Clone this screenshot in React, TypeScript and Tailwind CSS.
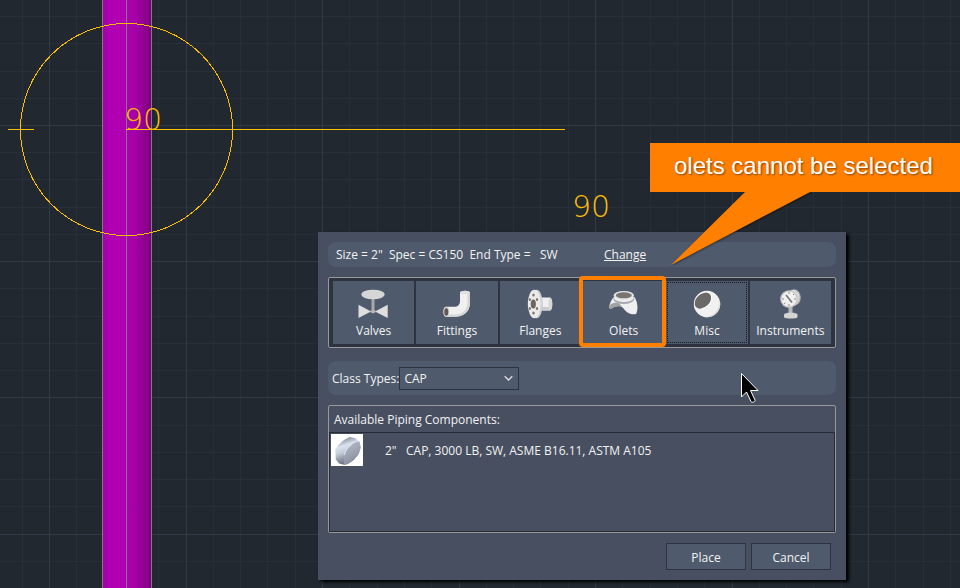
import React from "react";

const gridLines = Array.from({ length: 80 }, (_, i) => i - 10);

function Drawing() {
  return (
    <svg className="absolute inset-0 h-full w-full" aria-hidden="true" shapeRendering="crispEdges">
      <defs>
        <linearGradient id="pipe" x1="0" x2="1" y1="0" y2="0">
          <stop offset="0" stopColor="#a800aa" />
          <stop offset="0.2" stopColor="#b100b3" />
          <stop offset="0.5" stopColor="#ae00b0" />
          <stop offset="0.75" stopColor="#9d009f" />
          <stop offset="1" stopColor="#780079" />
        </linearGradient>
      </defs>
      {gridLines.map((i) => (
        <React.Fragment key={i}>
          <rect x={Math.round(49 + i * 27.3)} y="0" width="1" height="100%" fill="#272f3a" />
          <rect y={Math.round(125 + i * 27.24)} x="0" height="1" width="100%" fill="#272f3a" />
        </React.Fragment>
      ))}
      {gridLines
        .filter((i) => i % 5 === 0)
        .map((i) => (
          <React.Fragment key={i}>
            <rect x={Math.round(49 + i * 27.3)} y="0" width="1" height="100%" fill="#323a48" />
            <rect y={Math.round(125 + i * 27.24)} x="0" height="1" width="100%" fill="#323a48" />
          </React.Fragment>
        ))}
      <rect x="102" y="0" width="50" height="100%" fill="url(#pipe)" />
      <rect x="102" y="0" width="1" height="100%" fill="#7d7d7d" />
      <rect x="126" y="0" width="1" height="100%" fill="#7d7d7d" />
      <rect x="151" y="0" width="1" height="100%" fill="#7d7d7d" />
      <circle cx="126.5" cy="129.5" r="106" fill="none" stroke="#ffbf00" />
      <rect x="8" y="129" width="26" height="1" fill="#ffbf00" />
      <rect x="126" y="129" width="439" height="1" fill="#ffbf00" />
    </svg>
  );
}

function ValveIcon() {
  return (
    <svg width="32" height="32" viewBox="0 0 32 32" aria-hidden="true">
      <rect x="13.500" y="9" width="3" height="14" fill="#a9a9a9" />
      <ellipse cx="15" cy="6.500" rx="11.7" ry="4.8" fill="#d6d6d6" />
      <path d="M.5 16.800 13 23.500.5 30zM29.700 16.800 17 23.500l12.700 6.500z" fill="#dedede" />
      <path d="M12 23 15 21.500l3 1.500v1L15 25.500l-3-1.500z" fill="#b5b5b5" />
    </svg>
  );
}

function FittingIcon() {
  return (
    <svg width="32" height="32" viewBox="0 0 32 32" aria-hidden="true">
      <path d="M19 5c0-3 10-3 10 0v9.500C29 24 22 28.800 14 28.800H5c-3.300 0-3.300-10 0-10h8c4 0 6-2.300 6-5.800z" fill="#f0f0f0" />
      <path d="M29 5v9.500C29 24 22 28.800 14 28.800H5.500V26.500H14c7.500 0 12.500-4.500 12.500-12V3.500z" fill="#d6d6d6" />
      <path d="M19 5c0-3 10-3 10 0-1 1.500-9 1.500-10 0z" fill="#dfdfdf" />
      <ellipse cx="5.300" cy="23.800" rx="2.900" ry="5" fill="#d1d1d1" />
      <ellipse cx="5.300" cy="24" rx="2" ry="3.700" fill="#60564f" />
    </svg>
  );
}

function FlangeIcon() {
  return (
    <svg width="32" height="32" viewBox="0 0 32 32" aria-hidden="true">
      <path d="M17 9.500h9c3 0 3 13 0 13h-9z" fill="#efefef" />
      <path d="M17 19h10.700c-.4 2-1 3.500-2 3.500H17z" fill="#cccccc" />
      <path d="M26 9.700c3 1 3 12 0 12.800-2-2-2-11 0-12.800z" fill="#d7d7d7" />
      <ellipse cx="12.500" cy="16" rx="6.300" ry="14.300" fill="#cfcfcf" />
      <ellipse cx="10.300" cy="16" rx="6.500" ry="14.300" fill="#eaeaea" />
      <ellipse cx="9.300" cy="16" rx="2.600" ry="4.500" fill="#6b6560" />
      <g fill="#77716c">
        <ellipse cx="9.500" cy="7" rx="1.200" ry="1.600" />
        <ellipse cx="9.500" cy="25" rx="1.200" ry="1.600" />
        <ellipse cx="5.800" cy="11.500" rx="1.100" ry="1.500" />
        <ellipse cx="13" cy="11.500" rx="1.100" ry="1.500" />
        <ellipse cx="5.800" cy="20.500" rx="1.100" ry="1.500" />
        <ellipse cx="13" cy="20.500" rx="1.100" ry="1.500" />
      </g>
    </svg>
  );
}

function OletIcon() {
  return (
    <svg width="32" height="32" viewBox="0 0 32 32" aria-hidden="true">
      <path d="M6 9C3 12 1.500 15.500 1.300 19.500c0 1.500 1.500 1.200 2.500.7 3.500-2.200 7-3.200 10-1.200 2 1.300 3 3.500 5 5 3 2.200 6.500 2.800 9.300 2 2.500-5 1.400-12-1.600-17z" fill="#f0f0f0" />
      <path d="M1.500 19C1.700 16.500 4 15 7 14.800c3-.2 5.500 1 7 4.200-3-1.500-6.500-.5-9.500 1.100-1.500.8-3.200.7-3-1.100z" fill="#a2a2a2" />
      <path d="M5.700 9c.5 6.500 19.500 6.500 20.200 0l.6 1.500c-1 7.500-20.200 7.300-21.200.5z" fill="#a8adb4" />
      <ellipse cx="15.800" cy="7.500" rx="10.200" ry="4.500" fill="#e5e5e5" />
      <ellipse cx="15.800" cy="7.300" rx="8" ry="3" fill="#777472" />
    </svg>
  );
}

function MiscIcon() {
  return (
    <svg width="32" height="32" viewBox="0 0 32 32" aria-hidden="true">
      <circle cx="16" cy="16" r="13.200" fill="#f1f1f1" />
      <path d="M29 13C31 23 22.500 31 13 28.900c9 .3 15-7 16-15.900z" fill="#dcdcdc" />
      <ellipse cx="12" cy="12.500" rx="10.200" ry="7.300" transform="rotate(-43 12 12.500)" fill="#ffffff" />
      <ellipse cx="11.900" cy="12.600" rx="9.500" ry="6.500" transform="rotate(-43 11.900 12.600)" fill="#6b6867" />
    </svg>
  );
}

function InstrumentIcon() {
  return (
    <svg width="32" height="32" viewBox="0 0 32 32" aria-hidden="true">
      <rect x="14.500" y="19" width="4" height="8" fill="#b7b7b7" />
      <path d="M10 26.500c0-2.500 13.500-2.500 13.500 0V29c0 2-13.500 2-13.500 0z" fill="#d4d4d4" />
      <ellipse cx="20" cy="9.500" rx="6.800" ry="8.300" fill="#b0b0b0" />
      <ellipse cx="19.500" cy="9.500" rx="6" ry="7.500" fill="#d9d9d9" />
      <circle cx="15" cy="11" r="8.800" fill="#c4c4c4" />
      <circle cx="15" cy="11" r="7.500" fill="#f0f0f0" />
      <path d="m12 7 6 7.500" stroke="#777" strokeWidth="1.700" />
      <path d="M15 4v2M15 16v2M8 11h2M20 11h2M10 16l1.300-1.300M19 7l1-1" stroke="#888" strokeWidth="1" />
    </svg>
  );
}

const categories = [
  { label: "Valves", Icon: ValveIcon },
  { label: "Fittings", Icon: FittingIcon },
  { label: "Flanges", Icon: FlangeIcon },
  { label: "Olets", Icon: OletIcon },
  { label: "Misc", Icon: MiscIcon },
  { label: "Instruments", Icon: InstrumentIcon },
];

function CapThumbnail() {
  return (
    <svg className="h-8 w-8 bg-white" viewBox="0 0 32 32" aria-hidden="true">
      <defs>
        <linearGradient id="capSide" x1="0.3" y1="0" x2="0.6" y2="1">
          <stop offset="0" stopColor="#737984" />
          <stop offset="0.3" stopColor="#dbe3f0" />
          <stop offset="0.5" stopColor="#c3ccda" />
          <stop offset="0.75" stopColor="#8a909c" />
          <stop offset="1" stopColor="#555a63" />
        </linearGradient>
        <linearGradient id="capFace" x1="0.2" y1="0" x2="0.6" y2="1">
          <stop offset="0" stopColor="#b4bccb" />
          <stop offset="1" stopColor="#868c99" />
        </linearGradient>
      </defs>
      <path d="M4.300 15.500 8 10.500 13 6l5.500-3 5.500 1 4.500 3.500 1.200 6-2 6.500-5 6-6 4-3.700.8-5-1.300L4.800 25.500z" fill="url(#capSide)" />
      <path d="m28.500 7.500 1.200 6-2 6.500-5 6-6 4-3.700.8c-1-6 .5-11.800 4-16.300 3-3.800 7.500-7 11.500-7z" fill="url(#capFace)" />
      <path d="M13.500 21c.5-4 3-8 7-10" stroke="#dfe5ef" fill="none" />
    </svg>
  );
}

function PartDialog() {
  return (
    <section
      aria-label="Piping components"
      className="absolute left-[318px] top-[232px] flex w-[528px] flex-col bg-[#474f61] p-[10px] shadow-[3px_2px_3px_0px_#000000]"
    >
      <div className="flex h-[25px] items-center rounded-lg bg-[#4f5b6d] px-2">
        <span className="w-[268px] whitespace-pre">Size = 2"  Spec = CS150  End Type =   SW</span>
        <a href="#change" className="underline">
          Change
        </a>
      </div>

      <div className="mt-[10px] grid grid-cols-6 gap-[2px] rounded-[2px] border border-[#999997] bg-[#2d3340] px-1 py-[3px]">
        {categories.map(({ label, Icon }) => (
          <button
            key={label}
            type="button"
            className="relative flex h-[63px] flex-col items-center bg-[#4f5b6d] pt-[7px]"
          >
            <Icon />
            <span className="mt-[3px] leading-4">{label}</span>
            {label === "Misc" && <span className="absolute inset-px border border-dotted border-[#15181e]" />}
            {label === "Olets" && (
              <span className="absolute -bottom-[3px] -left-1 -right-[2px] -top-[5px] z-10 rounded-[4px] border-4 border-[#ff8000]" />
            )}
          </button>
        ))}
      </div>

      <div className="mt-[13px] flex h-[34px] items-center rounded-lg bg-[#4f5b6d] pl-1">
        <label htmlFor="class-type" className="whitespace-nowrap pt-px">
          Class Types:
        </label>
        <div className="relative">
          <select
            id="class-type"
            className="block h-[23px] w-[120px] appearance-none border border-[#2d3340] bg-[#4f5b6d] px-1 pt-px"
          >
            <option>CAP</option>
          </select>
          <svg className="pointer-events-none absolute right-1.5 top-2" width="9" height="7" viewBox="0 0 9 7" aria-hidden="true">
            <path d="m.7 1.200 3.800 3.800 3.800-3.800" stroke="#dddddd" strokeWidth="1.300" fill="none" />
          </svg>
        </div>
      </div>

      <div className="mt-[10px] flex flex-col rounded-[2px] border border-[#999997]">
        <h2 className="px-[5px] pb-[4px] pt-[6px] leading-4">Available Piping Components:</h2>
        <ul className="h-[100px] border border-[#252b35] p-px">
          <li className="flex items-center">
            <CapThumbnail />
            <span className="ml-[22px] whitespace-pre pt-px">2"   CAP, 3000 LB, SW, ASME B16.11, ASTM A105</span>
          </li>
        </ul>
      </div>

      <div className="mt-[10px] flex justify-end gap-[5px] pr-[5px]">
        <button type="button" className="h-[27px] w-20 border border-[#2d3340] bg-[#4f5b6d] pt-[2px]">
          Place
        </button>
        <button type="button" className="h-[27px] w-20 border border-[#2d3340] bg-[#4f5b6d] pt-[2px]">
          Cancel
        </button>
      </div>
    </section>
  );
}

export default function App() {
  return (
    <main className="relative h-screen min-h-[588px] overflow-hidden bg-[#222830] font-['Open_Sans','Noto_Sans',sans-serif] text-[12px] text-[#f2f2f2]">
      <Drawing />
      <span className="absolute left-[124px] top-[105px] font-['DejaVu_Sans',sans-serif] text-[30px] font-extralight leading-[30px] text-[#ffbf00]">
        90
      </span>
      <span className="absolute left-[572px] top-[192px] font-['DejaVu_Sans',sans-serif] text-[30px] font-extralight leading-[30px] text-[#ffbf00]">
        90
      </span>

      <PartDialog />

      <svg className="absolute left-[670px] top-[191px] drop-shadow-[0_1px_1px_#00000080]" width="142" height="76" viewBox="0 0 142 76" aria-hidden="true">
        <path d="M76 0 1 74 142 0z" fill="#ff8000" />
      </svg>
      <p className="absolute left-[650px] right-0 top-[143px] flex h-[49px] items-center bg-[#ff8000] pb-1 pl-6 font-['Liberation_Sans',sans-serif] text-[24px] text-white [text-shadow:1px_1px_2px_#00000080]">
        olets cannot be selected
      </p>

      <svg className="absolute left-[740px] top-[372px]" width="20" height="32" viewBox="0 0 20 32" aria-hidden="true">
        <path
          d="M1.500 1.500v23.500l5-5 4.500 9.500c1 1.500 4.500.5 4-1.500l-4.500-9.500h7.500z"
          fill="#000000"
          stroke="#ffffff"
          strokeWidth="1"
        />
      </svg>
    </main>
  );
}
